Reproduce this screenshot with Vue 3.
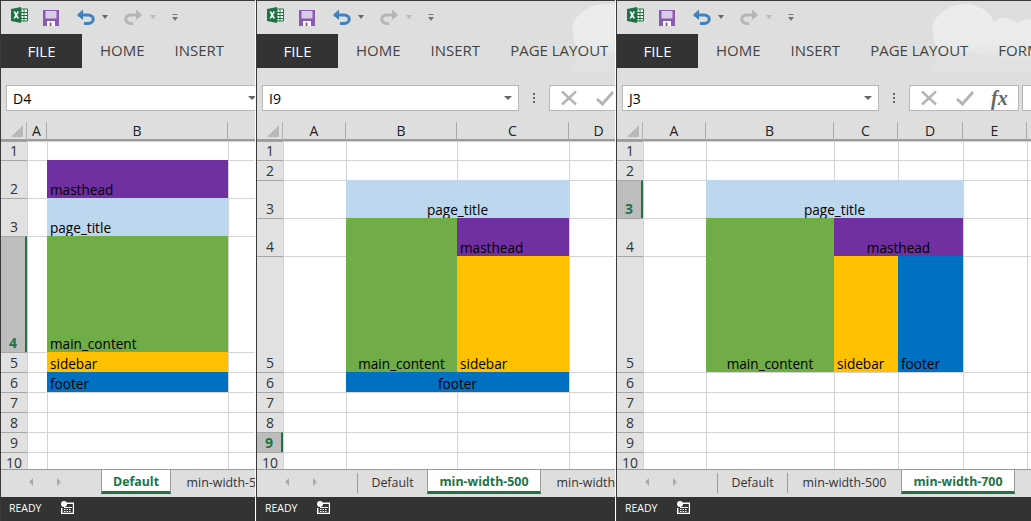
<script setup>
// one entry per Excel window, sizes are in px
const rows1 = [19, 38, 38, 116, 20, 20, 20, 20, 20, 20]
const rows2 = [19, 20, 38, 38, 116, 20, 20, 20, 20, 20]

const tabWidths = { Default: 70, 'min-width-500': 114, 'min-width-700': 114, wide: 60 }

const windows = [
  {
    name: 'D4',
    width: 255,
    tabsRibbon: ['HOME', 'INSERT'],
    columns: [20, 181, 40],
    labels: ['A', 'B', ''],
    rows: rows1,
    activeRow: 4,
    formula: false,
    cells: [
      { text: 'masthead', fill: 'purple', col: '2', row: '2' },
      { text: 'page_title', fill: 'blue', col: '2', row: '3' },
      { text: 'main_content', fill: 'green', col: '2', row: '4' },
      { text: 'sidebar', fill: 'yellow', col: '2', row: '5' },
      { text: 'footer', fill: 'navy', col: '2', row: '6' }
    ],
    sheets: ['Default', 'min-width-500'],
    activeSheet: 0
  },
  {
    name: 'I9',
    width: 359,
    tabsRibbon: ['HOME', 'INSERT', 'PAGE LAYOUT'],
    columns: [63, 111, 112, 60],
    labels: ['A', 'B', 'C', 'D'],
    rows: rows2,
    activeRow: 9,
    formula: true,
    cloud: true,
    cells: [
      { text: 'page_title', fill: 'blue', col: '2 / 4', row: '3', center: true },
      { text: 'main_content', fill: 'green', col: '2', row: '4 / 6', center: true },
      { text: 'masthead', fill: 'purple', col: '3', row: '4' },
      { text: 'sidebar', fill: 'yellow', col: '3', row: '5' },
      { text: 'footer', fill: 'navy', col: '2 / 4', row: '6', center: true }
    ],
    sheets: ['Default', 'min-width-500', 'min-width-700'],
    activeSheet: 1
  },
  {
    name: 'J3',
    width: 415,
    tabsRibbon: ['HOME', 'INSERT', 'PAGE LAYOUT', 'FORMULAS'],
    columns: [63, 128, 64, 65, 64, 30],
    labels: ['A', 'B', 'C', 'D', 'E', ''],
    rows: rows2,
    activeRow: 3,
    formula: true,
    fx: true,
    cloud: true,
    cells: [
      { text: 'page_title', fill: 'blue', col: '2 / 5', row: '3', center: true },
      { text: 'main_content', fill: 'green', col: '2', row: '4 / 6', center: true },
      { text: 'masthead', fill: 'purple', col: '3 / 5', row: '4', center: true },
      { text: 'sidebar', fill: 'yellow', col: '3', row: '5' },
      { text: 'footer', fill: 'navy', col: '4', row: '5' }
    ],
    sheets: ['Default', 'min-width-500', 'min-width-700', 'wide'],
    activeSheet: 2
  }
]

function gridStyle(win) {
  return {
    gridTemplateColumns: '26px ' + win.columns.map((c) => c + 'px').join(' '),
    gridTemplateRows: '19px ' + win.rows.map((r) => r + 'px').join(' ')
  }
}

// +1 because the header column and the header row take the first grid track
function cellPlace(cell) {
  const bump = (value) =>
    value
      .split('/')
      .map((n) => Number(n) + 1)
      .join(' / ')
  return { gridColumn: bump(cell.col), gridRow: bump(cell.row) }
}
</script>

<template>
  <div class="screen">
    <section
      v-for="win in windows"
      :key="win.name"
      class="window"
      :style="{ width: win.width + 'px' }"
    >
      <div class="ribbon">
        <svg v-if="win.cloud" class="cloud" width="120" height="72" viewBox="0 0 120 72">
          <defs>
            <linearGradient id="puff" x1="0" y1="0" x2="0" y2="1">
              <stop offset="0" stop-color="#ececec" />
              <stop offset="0.65" stop-color="#ebebeb" />
              <stop offset="1" stop-color="#e2e2e2" />
            </linearGradient>
          </defs>
          <path d="M6 46 C50 48 80 50 120 42 V72 H0 Z" fill="#e2e2e2" opacity="0.7" />
          <path
            d="M1 35 C-3 18 15 4 33 4 C47 4 58 12 62 22 C68 16 79 17 85 24 C92 17 110 17 116 30 C122 44 110 56 98 62 C70 56 30 52 7 50 C3 46 1 40 1 35 Z"
            fill="url(#puff)"
          />
        </svg>

        <div class="qat">
          <svg class="logo" width="17" height="16" viewBox="0 0 17 16">
            <path d="M0 2 L10 0 V16 L0 14 Z" fill="#1f7244" />
            <path d="M10 2 H16.5 V14 H10 Z" fill="#fff" stroke="#1f7244" />
            <path d="M10 5.5 H16 M10 8.5 H16 M10 11.5 H16 M13 2 V14" stroke="#1f7244" fill="none" />
            <path d="M2.5 4.5 H4.3 L5.2 6.6 L6.2 4.5 H8 L6.2 8 L8 11.5 H6.2 L5.2 9.4 L4.2 11.5 H2.5 L4.2 8 Z" fill="#fff" />
          </svg>
          <svg class="save" width="16" height="16" viewBox="0 0 16 16">
            <path d="M0 0 H16 V16 H0 Z" fill="#8a5bb0" />
            <path d="M2.5 1 H13.5 V8.5 H2.5 Z" fill="#d9cce6" />
            <path d="M4 11 H12 V16 H4 Z" fill="#fff" />
            <path d="M6.5 12.5 H8.5 V16 H6.5 Z" fill="#8a5bb0" />
          </svg>
          <svg class="undo" width="19" height="16" viewBox="0 0 19 16">
            <path d="M2 6 H12 C19 6 19 14.5 12 14.5 H8" fill="none" stroke="#4080be" stroke-width="3" />
            <path d="M7 0.5 L1 6 L7 11 Z" fill="#4080be" />
          </svg>
          <span class="arrow"></span>
          <svg class="redo" width="19" height="16" viewBox="0 0 19 16">
            <path d="M17 6 H7 C0 6 0 14.5 7 14.5 H9" fill="none" stroke="#b5b5b5" stroke-width="3" />
            <path d="M12 0.5 L18 6 L12 11 Z" fill="#b5b5b5" />
          </svg>
          <span class="arrow faded"></span>
          <svg class="customize" width="6" height="8" viewBox="0 0 6 8">
            <path d="M0.5 0.5 H5.5" stroke="#777" />
            <path d="M0 3 H6 L3 7 Z" fill="#777" />
          </svg>
        </div>

        <nav class="menu">
          <span class="file">FILE</span>
          <span v-for="tab in win.tabsRibbon" :key="tab" class="menu-item">{{ tab }}</span>
        </nav>

        <div class="formula-bar">
          <div class="name-box">
            <span>{{ win.name }}</span>
            <i class="name-arrow"></i>
          </div>
          <template v-if="win.formula">
            <div class="dots"><b></b><b></b><b></b></div>
            <div class="buttons">
              <svg width="18" height="16" viewBox="0 0 18 16">
                <path d="M2 1.5 L16 14.5 M16 1.5 L2 14.5" stroke="#b4b4b4" stroke-width="2.4" fill="none" />
              </svg>
              <svg width="20" height="16" viewBox="0 0 20 16">
                <path d="M2 9 L7.5 14 L18 2" stroke="#b4b4b4" stroke-width="3" fill="none" />
              </svg>
              <span v-if="win.fx" class="fx">fx</span>
            </div>
            <div v-if="win.fx" class="input"></div>
          </template>
        </div>
      </div>

      <div class="sheet" :style="gridStyle(win)">
        <div class="corner"><i></i></div>
        <div v-for="(label, i) in win.labels" :key="'c' + i" class="col-head">{{ label }}</div>

        <template v-for="(height, r) in win.rows" :key="'r' + r">
          <div
            class="row-head"
            :class="{ active: win.activeRow === r + 1 }"
            :style="{ gridRow: r + 2 }"
          >
            {{ r + 1 }}
          </div>
          <div
            v-for="(label, c) in win.labels"
            :key="c"
            class="cell"
            :style="{ gridRow: r + 2, gridColumn: c + 2 }"
          ></div>
        </template>

        <div
          v-for="cell in win.cells"
          :key="cell.text"
          class="filled"
          :class="[cell.fill, { center: cell.center }]"
          :style="cellPlace(cell)"
        >
          {{ cell.text }}
        </div>
      </div>

      <div class="sheet-tabs">
        <div class="nav-arrows">
          <i class="left"></i>
          <i class="right"></i>
        </div>
        <span
          v-for="(sheet, i) in win.sheets"
          :key="sheet"
          class="sheet-tab"
          :class="{ current: win.activeSheet === i }"
          :style="{ width: tabWidths[sheet] + 'px' }"
        >
          {{ sheet }}
        </span>
      </div>

      <footer class="status">
        <span>READY</span>
        <svg width="13" height="13" viewBox="0 0 13 13">
          <circle cx="3" cy="3" r="3" fill="#fff" />
          <path d="M6 1.5 H13 V13 H0 V7 H1.5 V11.8 H11.8 V3 H6 Z" fill="#fff" />
          <path d="M3 6 H11 V7 H3 Z M3 8 H4.5 V9 H3 Z M5.5 8 H7 V9 H5.5 Z M8 8 H9.5 V9 H8 Z M3 10 H4.5 V11 H3 Z M5.5 10 H7 V11 H5.5 Z M8 10 H9.5 V11 H8 Z" fill="#fff" />
        </svg>
      </footer>
    </section>
  </div>
</template>

<style>
html,
body {
  margin: 0;
  background: #fff;
}
</style>

<style scoped>
.screen {
  display: flex;
  gap: 1px;
  width: 1031px;
  height: 521px;
  overflow: hidden;
  font-family: 'Open Sans', 'Liberation Sans', sans-serif;
}

.window {
  flex: none;
  display: flex;
  flex-direction: column;
  height: 521px;
  box-sizing: border-box;
  border-left: 1px solid #3a3a3a;
  border-top: 1px solid #3a3a3a;
  overflow: hidden;
  background: #dedede;
}

.ribbon {
  position: relative;
  height: 121px;
  flex: none;
}

.cloud {
  position: absolute;
  left: 315px;
  top: -1px;
}

.qat {
  position: relative;
  display: flex;
  align-items: center;
  height: 33px;
  padding-left: 10px;
  padding-bottom: 2px;
  box-sizing: border-box;
}

.logo {
  margin-top: -3px;
}

.save {
  margin-left: 15px;
  margin-top: 2px;
}

.undo {
  margin-left: 17px;
  margin-top: 1px;
}

.arrow {
  width: 0;
  height: 0;
  margin-left: 7px;
  margin-top: 1px;
  border-left: 3.5px solid transparent;
  border-right: 3.5px solid transparent;
  border-top: 4px solid #666;
}

.arrow.faded {
  border-top-color: #bbb;
}

.redo {
  margin-left: 16px;
  margin-top: 1px;
}

.customize {
  margin-left: 16px;
  margin-top: 3px;
}

.menu {
  position: relative;
  display: flex;
  height: 34px;
  white-space: nowrap;
  font-size: 15px;
  line-height: 32px;
  color: #444;
}

.file {
  width: 81px;
  height: 34px;
  flex: none;
  margin-right: 18px;
  line-height: 34px;
  text-align: center;
  background: #333;
  color: #fff;
}

.menu-item {
  flex: none;
  margin-right: 30px;
}

.formula-bar {
  display: flex;
  align-items: stretch;
  height: 26px;
  margin-top: 17px;
  margin-left: 5px;
  white-space: nowrap;
}

.name-box {
  flex: none;
  width: 257px;
  display: flex;
  align-items: center;
  justify-content: space-between;
  box-sizing: border-box;
  padding: 0 6px;
  background: #fff;
  border: 1px solid #b8b8b8;
  font-size: 14px;
  color: #000;
}

.name-arrow {
  width: 0;
  height: 0;
  border-left: 4px solid transparent;
  border-right: 4px solid transparent;
  border-top: 4px solid #666;
}

.dots {
  flex: none;
  width: 30px;
  display: flex;
  flex-direction: column;
  align-items: center;
  justify-content: center;
  gap: 2px;
}

.dots b {
  width: 2px;
  height: 2px;
  background: #666;
}

.buttons {
  flex: none;
  width: 110px;
  display: flex;
  align-items: center;
  gap: 17px;
  box-sizing: border-box;
  padding-left: 10px;
  background: #fff;
  border: 1px solid #b8b8b8;
}

.fx {
  margin-left: -1px;
  font-family: 'Liberation Serif', serif;
  font-style: italic;
  font-weight: bold;
  font-size: 20px;
  color: #666;
}

.input {
  flex: none;
  width: 60px;
  margin-left: 3px;
  background: #fff;
  border: 1px solid #b8b8b8;
}

.sheet {
  flex: none;
  display: grid;
  height: 347px;
  overflow: hidden;
  background: #fff;
  font-size: 14px;
}

.corner,
.col-head {
  background: #dedede;
  border-bottom: 2px solid #9c9c9c;
  box-sizing: border-box;
}

.corner {
  position: relative;
  border-right: 1px solid #b5b5b5;
}

.corner i {
  position: absolute;
  right: 3px;
  bottom: 2px;
  width: 0;
  height: 0;
  border-left: 12px solid transparent;
  border-bottom: 12px solid #b8b8b8;
}

.col-head {
  display: flex;
  align-items: center;
  justify-content: center;
  border-right: 1px solid #aaa;
  color: #222;
  line-height: 17px;
}

.row-head {
  grid-column: 1;
  display: flex;
  align-items: flex-end;
  justify-content: center;
  box-sizing: border-box;
  background: #e1e1e1;
  border-top: 1px solid #a6a6a6;
  color: #333;
  line-height: 18px;
}

.row-head.active {
  background: #bdbdbd;
  border-right: 2px solid #217346;
  color: #217346;
  font-weight: bold;
}

.cell {
  box-sizing: border-box;
  border-top: 1px solid #d4d4d4;
  border-left: 1px solid #d4d4d4;
}

.filled {
  display: flex;
  align-items: flex-end;
  box-sizing: border-box;
  padding: 0 3px;
  font-size: 13.6px;
  line-height: 17px;
  color: #000;
  white-space: nowrap;
}

.filled.center {
  justify-content: center;
}

.purple {
  background: #7030a0;
}

.blue {
  background: #bdd7ee;
}

.green {
  background: #70ad47;
}

.yellow {
  background: #ffc000;
}

.navy {
  background: #0070c0;
}

.sheet-tabs {
  flex: none;
  display: flex;
  height: 28px;
  box-sizing: border-box;
  border-top: 1px solid #9c9c9c;
  white-space: nowrap;
  font-size: 12.4px;
  color: #333;
  background: #dedede;
}

.nav-arrows {
  flex: none;
  width: 100px;
  display: flex;
  align-items: center;
  gap: 24px;
  box-sizing: border-box;
  padding-left: 28px;
  padding-bottom: 3px;
}

.nav-arrows i {
  width: 0;
  height: 0;
  border-top: 4px solid transparent;
  border-bottom: 4px solid transparent;
}

.nav-arrows .left {
  border-right: 4px solid #aaa;
}

.nav-arrows .right {
  border-left: 4px solid #aaa;
}

.sheet-tab {
  flex: none;
  box-sizing: border-box;
  height: 20px;
  margin-top: 3px;
  line-height: 19px;
  text-align: center;
  border-left: 1px solid #9c9c9c;
}

.sheet-tab.current {
  height: 25px;
  margin-top: -1px;
  line-height: 24px;
  background: #fff;
  border: 1px solid #9c9c9c;
  border-bottom: 3px solid #217346;
  color: #217346;
  font-weight: bold;
}

.sheet-tab.current + .sheet-tab {
  border-left-color: transparent;
}

.status {
  flex: 1;
  display: flex;
  align-items: center;
  gap: 20px;
  padding-left: 8px;
  padding-bottom: 3px;
  background: #333;
  color: #fff;
  font-size: 10.5px;
}
</style>
